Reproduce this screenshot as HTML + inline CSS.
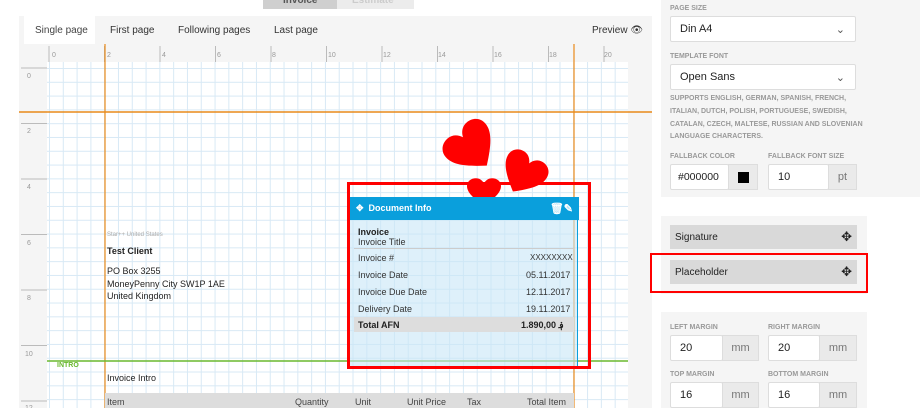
<!DOCTYPE html>
<html><head><meta charset="utf-8"><style>
*{margin:0;padding:0;box-sizing:border-box}
body{width:920px;height:408px;overflow:hidden;background:#fff;font-family:"Liberation Sans",sans-serif;position:relative;color:#222}
.a{position:absolute}
.t{position:absolute;font-size:10px;white-space:nowrap}
.lbl{position:absolute;font-size:7px;font-weight:bold;color:#999;white-space:nowrap}
.inp{position:absolute;background:#fff;border:1px solid #ddd;border-radius:2px;font-size:11px;padding-left:9px;display:flex;align-items:center}
.add{position:absolute;background:#eaeaea;border:1px solid #ddd;font-size:11px;color:#777;display:flex;align-items:center;justify-content:center}
.grid{background-color:#fff;background-image:linear-gradient(to right,#d8e9f5 1px,transparent 1px),linear-gradient(to bottom,#d8e9f5 1px,transparent 1px);background-size:13.8px 13.8px;background-position:2px 6px}
</style></head><body>
<div class="a" style="left:263px;top:0;width:74px;height:9px;background:#cfcfcf"></div>
<div class="a" style="left:337px;top:0;width:77px;height:9px;background:#ececec"></div>
<div class="t" style="left:283px;top:-5px;font-weight:bold;color:#555">Invoice</div>
<div class="t" style="left:352px;top:-5px;font-weight:bold;color:#ccc">Estimate</div>
<div class="a" style="left:19px;top:16px;width:633px;height:392px;background:#f5f5f5"></div>
<div class="a" style="left:24px;top:16px;width:71px;height:28px;background:#fff"></div>
<div class="t" style="left:35px;top:25px;color:#444">Single page</div>
<div class="t" style="left:110px;top:25px;color:#333">First page</div>
<div class="t" style="left:178px;top:25px;color:#333">Following pages</div>
<div class="t" style="left:274px;top:25px;color:#333">Last page</div>
<div class="t" style="left:592px;top:25px;color:#333">Preview 👁</div>
<div class="a grid" style="left:47px;top:62px;width:581px;height:346px"></div>
<svg class="a" style="left:0;top:0" width="920" height="408">
<g stroke="#bbb" stroke-width="1">
<line x1="49" y1="46" x2="49" y2="62"/><line x1="104.5" y1="46" x2="104.5" y2="62"/><line x1="160" y1="46" x2="160" y2="62"/><line x1="215.5" y1="46" x2="215.5" y2="62"/><line x1="271" y1="46" x2="271" y2="62"/><line x1="326.5" y1="46" x2="326.5" y2="62"/><line x1="382" y1="46" x2="382" y2="62"/><line x1="437.5" y1="46" x2="437.5" y2="62"/><line x1="493" y1="46" x2="493" y2="62"/><line x1="548.5" y1="46" x2="548.5" y2="62"/><line x1="604" y1="46" x2="604" y2="62"/>
<line x1="21" y1="68" x2="47" y2="68"/><line x1="21" y1="123.5" x2="47" y2="123.5"/><line x1="21" y1="179" x2="47" y2="179"/><line x1="21" y1="234.5" x2="47" y2="234.5"/><line x1="21" y1="290" x2="47" y2="290"/><line x1="21" y1="345.5" x2="47" y2="345.5"/><line x1="21" y1="401" x2="47" y2="401"/>
</g>
<g font-size="7" fill="#999" font-family="Liberation Sans">
<text x="52" y="57">0</text><text x="107" y="57">2</text><text x="162" y="57">4</text><text x="217" y="57">6</text><text x="272" y="57">8</text><text x="328" y="57">10</text><text x="383" y="57">12</text><text x="438" y="57">14</text><text x="494" y="57">16</text><text x="549" y="57">18</text><text x="604" y="57">20</text>
<text x="27" y="78">0</text><text x="27" y="133">2</text><text x="27" y="189">4</text><text x="27" y="245">6</text><text x="27" y="300">8</text><text x="25" y="356">10</text><text x="25" y="410">12</text>
</g>
<line x1="19" y1="112" x2="652" y2="112" stroke="#e88a1a" stroke-width="1.5"/>
<line x1="105" y1="44" x2="105" y2="408" stroke="#e88a1a" stroke-width="1.2"/>
<line x1="574" y1="44" x2="574" y2="408" stroke="#e88a1a" stroke-width="1.2"/>
<line x1="47" y1="361" x2="628" y2="361" stroke="#6ab82e" stroke-width="1.5"/>
</svg>
<div class="t" style="left:57px;top:362px;font-size:7px;font-weight:bold;color:#6ab82e">INTRO</div>
<div class="t" style="left:107px;top:232px;font-size:6px;color:#aaa">Star++ United States</div>
<div class="t" style="left:107px;top:246px;font-size:9px;font-weight:bold">Test Client</div>
<div class="t" style="left:107px;top:265px;font-size:9px;line-height:12.5px">PO Box 3255<br>MoneyPenny City SW1P 1AE<br>United Kingdom</div>
<div class="t" style="left:107px;top:373px;font-size:9px">Invoice Intro</div>
<div class="a" style="left:105px;top:393px;width:469px;height:15px;background:#ddd"></div>
<div class="t" style="left:107px;top:397px;font-size:9px;color:#444">Item</div>
<div class="t" style="left:295px;top:397px;font-size:9px;color:#444">Quantity</div>
<div class="t" style="left:355px;top:397px;font-size:9px;color:#444">Unit</div>
<div class="t" style="left:407px;top:397px;font-size:9px;color:#444">Unit Price</div>
<div class="t" style="left:467px;top:397px;font-size:9px;color:#444">Tax</div>
<div class="t" style="left:527px;top:397px;font-size:9px;color:#444">Total Item</div>
<svg class="a" style="left:0;top:0" width="920" height="408">
<defs><path id="h" d="M50,92 C20,68 0,48 0,26 C0,10 12,0 26,0 C38,0 46,8 50,18 C54,8 62,0 74,0 C88,0 100,10 100,26 C100,48 80,68 50,92Z"/></defs>
<g transform="translate(472,148) rotate(-40) scale(0.52,0.5) translate(-50,-46)"><use href="#h" fill="#f00"/></g>
<g transform="translate(523,174) rotate(30) scale(0.45,0.44) translate(-50,-46)"><use href="#h" fill="#f00"/></g>
<g transform="translate(484,192) scale(0.34,0.3) translate(-50,-46)"><use href="#h" fill="#f00"/></g>
</svg>
<div class="a" style="left:350px;top:197px;width:228px;height:169px;background:rgba(200,230,246,0.6);border-right:1px solid #0a9fdc"></div>
<div class="a" style="left:350px;top:197px;width:229px;height:23px;background:#0a9fdc;color:#fff;font-size:9px;font-weight:bold;display:flex;align-items:center;padding-left:6px">✥&nbsp;&nbsp;Document Info<span style="margin-left:auto;margin-right:6px;font-size:11px">🗑✎</span></div>
<div class="t" style="left:358px;top:227px;font-size:9px;font-weight:bold">Invoice</div>
<div class="t" style="left:358px;top:237px;font-size:9px;color:#333">Invoice Title</div>
<div class="a" style="left:354px;top:248px;width:220px;height:1px;background:#ccc"></div>
<div class="t" style="left:358px;top:253px;font-size:9px;color:#333">Invoice #</div><div class="t" style="left:530px;top:253px;font-size:8px;color:#333">XXXXXXXX</div>
<div class="t" style="left:358px;top:270px;font-size:9px;color:#333">Invoice Date</div><div class="t" style="left:526px;top:270px;font-size:9px;color:#333">05.11.2017</div>
<div class="t" style="left:358px;top:287px;font-size:9px;color:#333">Invoice Due Date</div><div class="t" style="left:526px;top:287px;font-size:9px;color:#333">12.11.2017</div>
<div class="t" style="left:358px;top:304px;font-size:9px;color:#333">Delivery Date</div><div class="t" style="left:526px;top:304px;font-size:9px;color:#333">19.11.2017</div>
<div class="a" style="left:354px;top:317px;width:220px;height:15px;background:#ddd"></div>
<div class="t" style="left:358px;top:320px;font-size:9px;font-weight:bold">Total AFN</div><div class="t" style="left:521px;top:320px;font-size:9px;font-weight:bold">1.890,00 ؋</div>
<div class="a" style="left:347px;top:182px;width:244px;height:187px;border:3px solid #f00"></div>
<div class="a" style="left:661px;top:0;width:266px;height:197px;background:#f5f5f5"></div>
<div class="lbl" style="left:670px;top:5px">PAGE SIZE</div>
<div class="inp" style="left:670px;top:16px;width:186px;height:26px">Din A4<span style="margin-left:auto;margin-right:10px;color:#555">⌄</span></div>
<div class="lbl" style="left:670px;top:53px">TEMPLATE FONT</div>
<div class="inp" style="left:670px;top:64px;width:186px;height:26px">Open Sans<span style="margin-left:auto;margin-right:10px;color:#555">⌄</span></div>
<div class="lbl" style="left:670px;top:93px;line-height:12.8px">SUPPORTS ENGLISH, GERMAN, SPANISH, FRENCH,<br>ITALIAN, DUTCH, POLISH, PORTUGUESE, SWEDISH,<br>CATALAN, CZECH, MALTESE, RUSSIAN AND SLOVENIAN<br>LANGUAGE CHARACTERS.</div>
<div class="lbl" style="left:670px;top:153px">FALLBACK COLOR</div>
<div class="lbl" style="left:768px;top:153px">FALLBACK FONT SIZE</div>
<div class="inp" style="left:670px;top:164px;width:59px;height:26px;padding-left:7px;font-size:10.5px">#000000</div>
<div class="add" style="left:728px;top:164px;width:30px;height:26px"><div style="width:11px;height:11px;background:#000"></div></div>
<div class="inp" style="left:768px;top:164px;width:61px;height:26px">10</div>
<div class="add" style="left:828px;top:164px;width:29px;height:26px">pt</div>
<div class="a" style="left:661px;top:216px;width:206px;height:78px;background:#f5f5f5"></div>
<div class="a" style="left:670px;top:225px;width:187px;height:24px;background:#d9d9d9;font-size:10px;display:flex;align-items:center;padding-left:5px">Signature<span style="margin-left:auto;margin-right:5px;font-size:13px">✥</span></div>
<div class="a" style="left:670px;top:260px;width:187px;height:24px;background:#d9d9d9;font-size:10px;display:flex;align-items:center;padding-left:5px">Placeholder<span style="margin-left:auto;margin-right:5px;font-size:13px">✥</span></div>
<div class="a" style="left:650px;top:253px;width:218px;height:40px;border:2px solid #f00"></div>
<div class="a" style="left:661px;top:312px;width:206px;height:96px;background:#f5f5f5"></div>
<div class="lbl" style="left:670px;top:324px">LEFT MARGIN</div>
<div class="lbl" style="left:768px;top:324px">RIGHT MARGIN</div>
<div class="inp" style="left:670px;top:335px;width:53px;height:26px">20</div>
<div class="add" style="left:722px;top:335px;width:37px;height:26px">mm</div>
<div class="inp" style="left:768px;top:335px;width:52px;height:26px">20</div>
<div class="add" style="left:819px;top:335px;width:38px;height:26px">mm</div>
<div class="lbl" style="left:670px;top:371px">TOP MARGIN</div>
<div class="lbl" style="left:768px;top:371px">BOTTOM MARGIN</div>
<div class="inp" style="left:670px;top:382px;width:53px;height:26px">16</div>
<div class="add" style="left:722px;top:382px;width:37px;height:26px">mm</div>
<div class="inp" style="left:768px;top:382px;width:52px;height:26px">16</div>
<div class="add" style="left:819px;top:382px;width:38px;height:26px">mm</div>
</body></html>
